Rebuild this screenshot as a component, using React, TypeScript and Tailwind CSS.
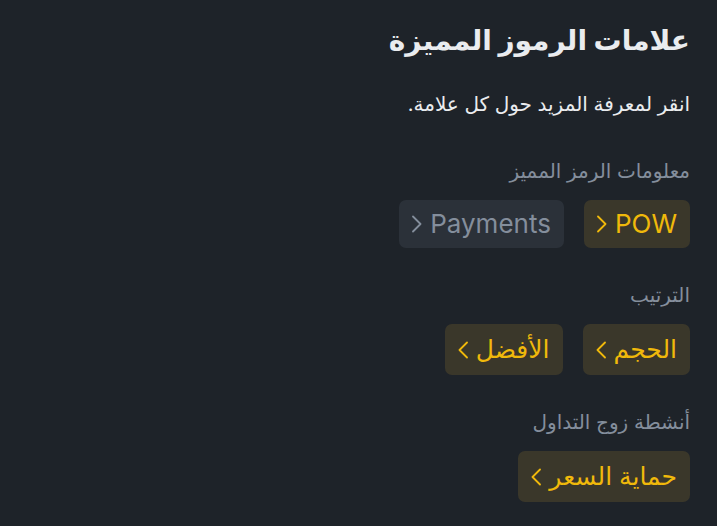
type Tag = { label: string; active?: boolean; latin?: boolean };

const sections: { title: string; tags: Tag[] }[] = [
  {
    title: 'معلومات الرمز المميز',
    tags: [
      { label: 'POW', active: true, latin: true },
      { label: 'Payments', latin: true },
    ],
  },
  {
    title: 'الترتيب',
    tags: [
      { label: 'الحجم', active: true },
      { label: 'الأفضل', active: true },
    ],
  },
  {
    title: 'أنشطة زوج التداول',
    tags: [{ label: 'حماية السعر', active: true }],
  },
];

function Chevron({ left }: { left?: boolean }) {
  return (
    <svg width="10" height="18" viewBox="0 0 10 18" fill="none" stroke="currentColor" strokeWidth="1.8" strokeLinecap="round" strokeLinejoin="round">
      {left ? <polyline points="9,1.5 1.5,9 9,16.5" /> : <polyline points="1,1.5 8.5,9 1,16.5" />}
    </svg>
  );
}

function Chip({ tag }: { tag: Tag }) {
  const color = tag.active ? 'text-[#f0b90b]' : 'text-[#848e9c]';
  const bg = tag.active ? 'bg-[#3a372a]' : 'bg-[#2b3139]';
  return (
    <button
      className={`flex items-center gap-[8px] rounded-[7px] px-[13px] ${bg} ${color} ${
        tag.latin ? 'h-[48px]' : 'h-[51px]'
      }`}
    >
      <span className={`leading-none ${tag.latin ? 'text-[26px]' : 'text-[25px]'}`}>{tag.label}</span>
      <Chevron left={!tag.latin} />
    </button>
  );
}

export default function App() {
  return (
    <div
      dir="rtl"
      className="min-h-[526px] w-full bg-[#1e2329] pr-[27px] pl-6 pt-[20px] text-[#eaecef]"
      style={{ fontFamily: '"Inter", "DejaVu Sans", "Noto Sans", sans-serif' }}
    >
      <h2 className="text-[28px] font-bold leading-[40px]">علامات الرموز المميزة</h2>
      <p className="mt-[29px] text-[20px] leading-[30px]">انقر لمعرفة المزيد حول كل علامة.</p>

      <div className="mt-[37px] flex flex-col gap-[32px]">
        {sections.map((s) => (
          <div key={s.title}>
            <div className="text-[20px] leading-[30px] text-[#848e9c]">{s.title}</div>
            <div className="mt-[14px] flex flex-wrap gap-[20px]">
              {s.tags.map((t) => (
                <Chip key={t.label} tag={t} />
              ))}
            </div>
          </div>
        ))}
      </div>
    </div>
  );
}
